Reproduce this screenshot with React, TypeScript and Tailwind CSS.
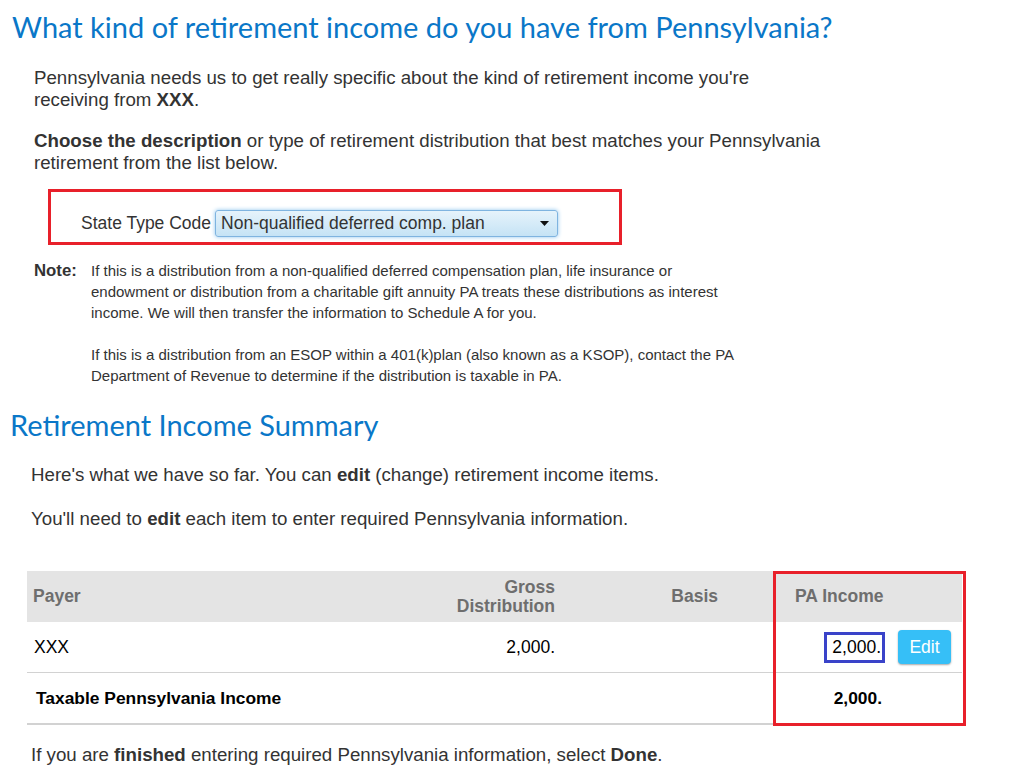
export default function App() {
  return (
    <div className="min-h-screen bg-white text-[#333] font-['Liberation_Sans',Arial,sans-serif]">
      <div className="pl-[12px] pt-[10px]">
        <h1 className="font-['Lato',sans-serif] text-[29px] leading-[34px] text-[#0a77c8]">
          What kind of retirement income do you have from Pennsylvania?
        </h1>
      </div>

      <div className="pl-[34px] pt-[23px] text-[18.7px] leading-[22px]">
        <p>
          Pennsylvania needs us to get really specific about the kind of retirement income you're
          <br />
          receiving from <b>XXX</b>.
        </p>
        <p className="mt-[19px]">
          <b>Choose the description</b> or type of retirement distribution that best matches your Pennsylvania
          <br />
          retirement from the list below.
        </p>
      </div>

      <div className="ml-[48px] mt-[15px] flex h-[56px] w-[574px] items-start border-[3px] border-[#e8202a] pl-[30px] pt-[18px]">
        <span className="text-[17.5px] leading-[27px]">State Type Code</span>
        <div className="ml-[4px] flex h-[27px] w-[343px] items-center justify-between rounded-[3px] border border-[#7fb4e0] bg-gradient-to-b from-[#e6f3fb] to-[#c5e3f5] pl-[5px] pr-[8px] shadow-[0_0_4px_#8ec5ee] text-[17.5px]">
          <span>Non-qualified deferred comp. plan</span>
          <svg width="9" height="5" viewBox="0 0 9 5">
            <path d="M0 0h9L4.5 5z" fill="#111" />
          </svg>
        </div>
      </div>

      <div className="mt-[15px] flex pl-[34px]">
        <span className="w-[57px] text-[16.8px] font-bold leading-[21px]">Note:</span>
        <div className="text-[15px] leading-[21px]">
          <p>
            If this is a distribution from a non-qualified deferred compensation plan, life insurance or
            <br />
            endowment or distribution from a charitable gift annuity PA treats these distributions as interest
            <br />
            income. We will then transfer the information to Schedule A for you.
          </p>
          <p className="mt-[21px]">
            If this is a distribution from an ESOP within a 401(k)plan (also known as a KSOP), contact the PA
            <br />
            Department of Revenue to determine if the distribution is taxable in PA.
          </p>
        </div>
      </div>

      <h2 className="mt-[23px] pl-[10px] font-['Lato',sans-serif] text-[29px] leading-[32px] text-[#0a77c8]">
        Retirement Income Summary
      </h2>

      <div className="pl-[31px] text-[18.7px] leading-[22px]">
        <p className="mt-[23px]">
          Here's what we have so far. You can <b>edit</b> (change) retirement income items.
        </p>
        <p className="mt-[22px]">
          You'll need to <b>edit</b> each item to enter required Pennsylvania information.
        </p>
      </div>

      <div className="relative ml-[27px] mt-[41px] w-[935px] text-[17.5px]">
        <div className="flex h-[51px] items-center bg-[#e4e4e4] font-bold text-[#6e6e6e]">
          <div className="w-[373px] pl-[6px]">Payer</div>
          <div className="w-[165px] pr-[10px] text-right leading-[19px]">
            Gross
            <br />
            Distribution
          </div>
          <div className="w-[208px] pr-[55px] text-right">Basis</div>
          <div className="flex-1 pl-[22px]">PA Income</div>
        </div>
        <div className="flex h-[51px] items-center border-b border-[#d2d2d2] text-black">
          <div className="w-[373px] pl-[7px]">XXX</div>
          <div className="w-[165px] pr-[10px] text-right">2,000.</div>
          <div className="w-[208px]" />
          <div className="flex flex-1 items-center justify-end pr-[11px]">
            <span className="flex h-[31px] w-[61px] items-center justify-end border-[3px] border-[#3a43c9] pr-[1px]">
              2,000.
            </span>
            <button className="ml-[13px] h-[34px] w-[53px] rounded-[4px] bg-[#36bff7] text-[17.5px] text-white shadow-[0_1px_2px_rgba(0,0,0,0.35)]">
              Edit
            </button>
          </div>
        </div>
        <div className="flex h-[52px] items-center border-b-2 border-[#d2d2d2] font-bold text-black">
          <div className="w-[538px] pl-[9px] text-[17.4px]">Taxable Pennsylvania Income</div>
          <div className="w-[208px]" />
          <div className="flex flex-1 justify-end pr-[80px] text-[17.4px]">2,000.</div>
        </div>
        <div className="pointer-events-none absolute left-[746px] top-0 h-[155px] w-[193px] border-[3px] border-[#e8202a]" />
      </div>

      <p className="pl-[31px] pt-[19px] text-[18.7px] leading-[22px]">
        If you are <b>finished</b> entering required Pennsylvania information, select <b>Done</b>.
      </p>
    </div>
  );
}
